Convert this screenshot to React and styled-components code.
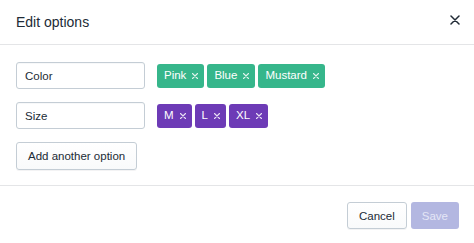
import React from 'react';
import styled, { createGlobalStyle } from 'styled-components';

const GlobalStyle = createGlobalStyle`
  html, body {
    margin: 0;
    padding: 0;
    background: #fff;
  }
  body {
    font-family: "Liberation Sans", Arial, sans-serif;
    color: #212b36;
    -webkit-font-smoothing: antialiased;
  }
`;

const Dialog = styled.div`
  width: 474px;
  height: 243px;
  display: flex;
  flex-direction: column;
  background: #fff;
`;

const Header = styled.div`
  height: 45px;
  display: flex;
  align-items: center;
  justify-content: space-between;
  padding: 0 14px 0 16px;
  border-bottom: 1px solid #e4e5e7;
  box-sizing: border-box;
`;

const Title = styled.h2`
  margin: 0;
  font-size: 14px;
  font-weight: 400;
  color: #212b36;
`;

const CloseButton = styled.button`
  width: 11px;
  height: 11px;
  padding: 0;
  border: none;
  background: none;
  display: flex;
  align-items: center;
  justify-content: center;
  cursor: pointer;
  margin-top: -4px;
`;

const Body = styled.div`
  padding: 17px 16px 15px;
  display: flex;
  flex-direction: column;
  gap: 13px;
  border-bottom: 1px solid #e4e5e7;
`;

const OptionRow = styled.div`
  display: flex;
  align-items: center;
  gap: 12px;
  height: 27px;
`;

const NameInput = styled.input`
  width: 129px;
  height: 27px;
  box-sizing: border-box;
  border: 1px solid #c4cdd5;
  border-radius: 3px;
  padding: 0 8px;
  font-family: inherit;
  font-size: 11.5px;
  color: #212b36;
  outline: none;
  box-shadow: inset 0 1px 0 rgba(99, 115, 129, 0.05);
`;

const TagList = styled.div`
  display: flex;
  gap: 3px;
`;

const Tag = styled.span`
  height: 24px;
  display: inline-flex;
  align-items: center;
  gap: 6px;
  padding: 0 6px 0 7px;
  border-radius: 3px;
  background: ${(p) => (p.$variant === 'purple' ? '#6d3bb6' : '#36b68b')};
  color: #fff;
  font-size: 11.5px;
  line-height: 1;
`;

const TagRemove = styled.span`
  display: inline-flex;
  align-items: center;
  opacity: 0.85;
`;

const SecondaryButton = styled.button`
  height: 28px;
  padding: 0 11px;
  border: 1px solid #c4cdd5;
  border-radius: 3px;
  background: linear-gradient(#ffffff, #f9fafb);
  box-shadow: 0 1px 0 rgba(22, 29, 37, 0.05);
  font-family: inherit;
  font-size: 11.5px;
  color: #212b36;
  cursor: pointer;
  align-self: flex-start;
`;

const Footer = styled.div`
  flex: 1;
  display: flex;
  justify-content: flex-end;
  align-items: flex-start;
  gap: 4px;
  padding: 16px 15px 0 16px;
`;

const PrimaryButton = styled.button`
  height: 27px;
  padding: 0 11px;
  border: none;
  border-radius: 3px;
  background: #b3b7e1;
  color: #e4e6f6;
  font-family: inherit;
  font-size: 11.5px;
  cursor: default;
`;

const FooterButton = styled(SecondaryButton)`
  height: 27px;
  padding: 0 11px;
`;

const SmallX = () => (
  <svg width="6" height="6" viewBox="0 0 6 6">
    <path d="M0.5 0.5L5.5 5.5M5.5 0.5L0.5 5.5" stroke="#fff" strokeWidth="1.1" strokeLinecap="round" />
  </svg>
);

const options = [
  { name: 'Color', variant: 'green', values: ['Pink', 'Blue', 'Mustard'] },
  { name: 'Size', variant: 'purple', values: ['M', 'L', 'XL'] },
];

export default function App() {
  return (
    <>
      <GlobalStyle />
      <Dialog>
        <Header>
          <Title>Edit options</Title>
          <CloseButton aria-label="Close">
            <svg width="10" height="10" viewBox="0 0 10 10">
              <path d="M1 1L9 9M9 1L1 9" stroke="#212b36" strokeWidth="1.5" strokeLinecap="round" />
            </svg>
          </CloseButton>
        </Header>
        <Body>
          {options.map((opt) => (
            <OptionRow key={opt.name}>
              <NameInput defaultValue={opt.name} />
              <TagList>
                {opt.values.map((v) => (
                  <Tag key={v} $variant={opt.variant}>
                    {v}
                    <TagRemove>
                      <SmallX />
                    </TagRemove>
                  </Tag>
                ))}
              </TagList>
            </OptionRow>
          ))}
          <SecondaryButton>Add another option</SecondaryButton>
        </Body>
        <Footer>
          <FooterButton>Cancel</FooterButton>
          <PrimaryButton>Save</PrimaryButton>
        </Footer>
      </Dialog>
    </>
  );
}
